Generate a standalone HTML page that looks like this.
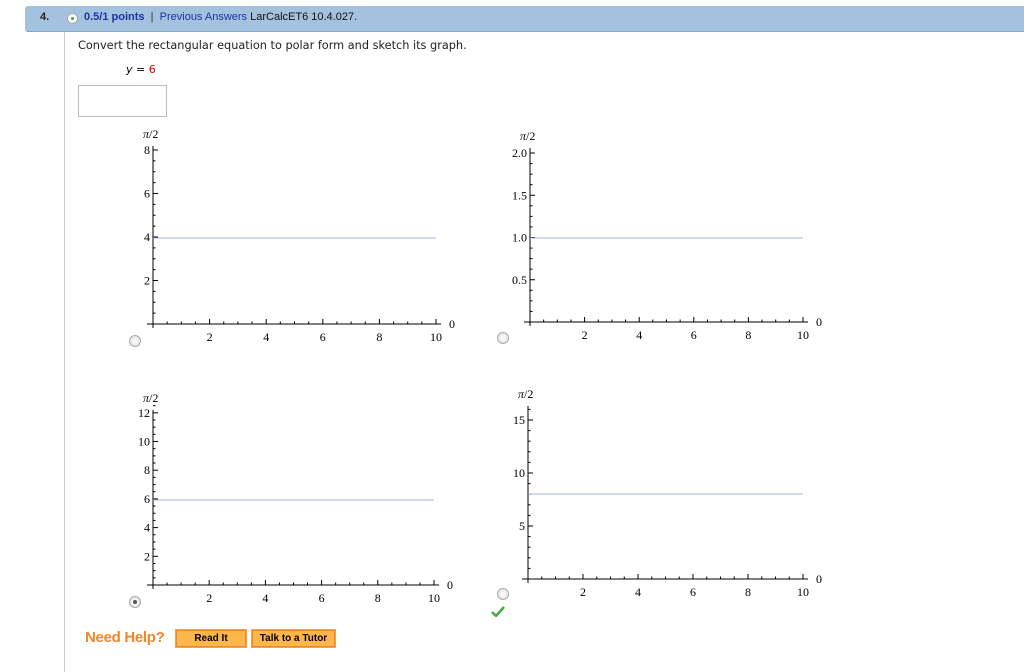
<!DOCTYPE html>
<html><head><meta charset="utf-8"><style>
body{margin:0;width:1024px;height:664px;background:#fff;position:relative;overflow:hidden;font-family:"Liberation Sans",sans-serif}
.bar{position:absolute;left:25px;top:6px;width:1010px;height:25px;background:#a4c2dd;border-radius:3px 0 0 3px;border-bottom:1px solid #8aa9c6}
.vline{position:absolute;left:64px;top:32px;width:1px;height:640px;background:#ccc}
.t{position:absolute;white-space:nowrap}
.radio{position:absolute;width:10px;height:10px;border-radius:50%;border:1px solid #aaa;background:radial-gradient(#fff,#ddd)}
.btn{position:absolute;top:630px;height:15px;background:#fdb64a;border:1px solid #e88a2e;outline:1px solid #f4a04d;font-size:10px;font-weight:bold;text-align:center;line-height:15px;color:#000}
</style></head><body>
<div class="bar"></div>
<div class="vline"></div>
<div class="t" style="left:40px;top:11px;font-size:11px;font-weight:bold;color:#222">4.</div>
<div style="position:absolute;left:67px;top:13px;width:9px;height:9px;border-radius:50%;background:#fff;border:1px solid #aaa"><div style="position:absolute;left:3px;top:3px;width:3px;height:3px;border-radius:50%;background:#3a3"></div></div>
<div class="t" style="left:84px;top:11px;font-size:11px;color:#1a33aa"><b>0.5/1 points</b> <span style="color:#333">&nbsp;|&nbsp;</span> Previous Answers <span style="color:#111">LarCalcET6 10.4.027.</span></div>
<div class="t" style="left:78px;top:39px;color:#222;font-family:'DejaVu Sans',sans-serif;font-size:11.3px">Convert the rectangular equation to polar form and sketch its graph.</div>
<div class="t" style="left:126px;top:63px;font-size:11px;font-family:'DejaVu Sans',sans-serif"><i>y</i> = <span style="color:#d00">6</span></div>
<div style="position:absolute;left:78px;top:85px;width:87px;height:30px;border:1px solid #bbb"></div>
<svg id="g" width="1024" height="664" style="position:absolute;left:0;top:0" font-family="Liberation Serif,serif" font-size="12"></svg>
<div class="radio" style="left:129px;top:335px"></div>
<div class="radio" style="left:497px;top:332px"></div>
<div class="radio" style="left:129px;top:596px"><div style="position:absolute;left:3px;top:3px;width:4px;height:4px;border-radius:50%;background:#555"></div></div>
<div class="radio" style="left:497px;top:588px"></div>
<svg style="position:absolute;left:491px;top:606px" width="14" height="11"><path d="M1 6 L5 10 L13 1" stroke="#4a4" stroke-width="2.5" fill="none"/></svg>
<div class="t" style="left:85px;top:629px;font-size:15px;font-weight:bold;color:#f0862a;letter-spacing:-0.3px">Need Help?</div>
<div class="btn" style="left:176px;width:68px">Read It</div>
<div class="btn" style="left:252px;width:81px">Talk to a Tutor</div>
<script>
var s='';
function G(x0,y0,xu,ymax,ypx,ymaj,yminor,ytop,lineY,fmt){
 var xr=x0+10*xu;
 s+='<line x1="'+(x0-6)+'" y1="'+y0+'" x2="'+(xr+5)+'" y2="'+y0+'" stroke="#000"/>';
 s+='<line x1="'+x0+'" y1="'+(y0+4)+'" x2="'+x0+'" y2="'+ytop+'" stroke="#000"/>';
 for(var i=1;i<=20;i++){var x=x0+i*xu/2,L=i%4==0?5:2.5;s+='<line x1="'+x+'" y1="'+y0+'" x2="'+x+'" y2="'+(y0-L)+'" stroke="#000"/>';
  if(i%4==0)s+='<text x="'+x+'" y="'+(y0+17)+'" text-anchor="middle">'+(i/2)+'</text>';}
 s+='<text x="'+(xr+13)+'" y="'+(y0+4)+'">0</text>';
 var n=Math.round(ymax/yminor);
 for(var j=1;j<=n;j++){var v=j*yminor,y=y0-v*ypx;var maj=Math.abs(v/ymaj-Math.round(v/ymaj))<1e-6;
  s+='<line x1="'+x0+'" y1="'+y+'" x2="'+(x0+(maj?5:2.5))+'" y2="'+y+'" stroke="#000"/>';
  if(maj)s+='<text x="'+(x0-3)+'" y="'+(y+4)+'" text-anchor="end">'+fmt(v)+'</text>';}
 s+='<text x="'+(x0-10)+'" y="'+(ytop-8)+'"><tspan font-style="italic">π</tspan>/2</text>';
 s+='<line x1="'+x0+'" y1="'+lineY+'" x2="'+xr+'" y2="'+lineY+'" stroke="#aab0dd"/>';
}
var I=function(v){return v};
G(153,324,28.3,8,21.75,2,0.5,146,238,I);
G(530,322,27.3,2,84.5,0.5,0.125,148,238,function(v){return v.toFixed(1)});
G(153,585,28.1,12.5,14.35,2,0.5,410,500,I);
G(528,579,27.5,16,10.6,5,1,406,494,I);
document.getElementById('g').innerHTML=s;
</script>
</body></html>
